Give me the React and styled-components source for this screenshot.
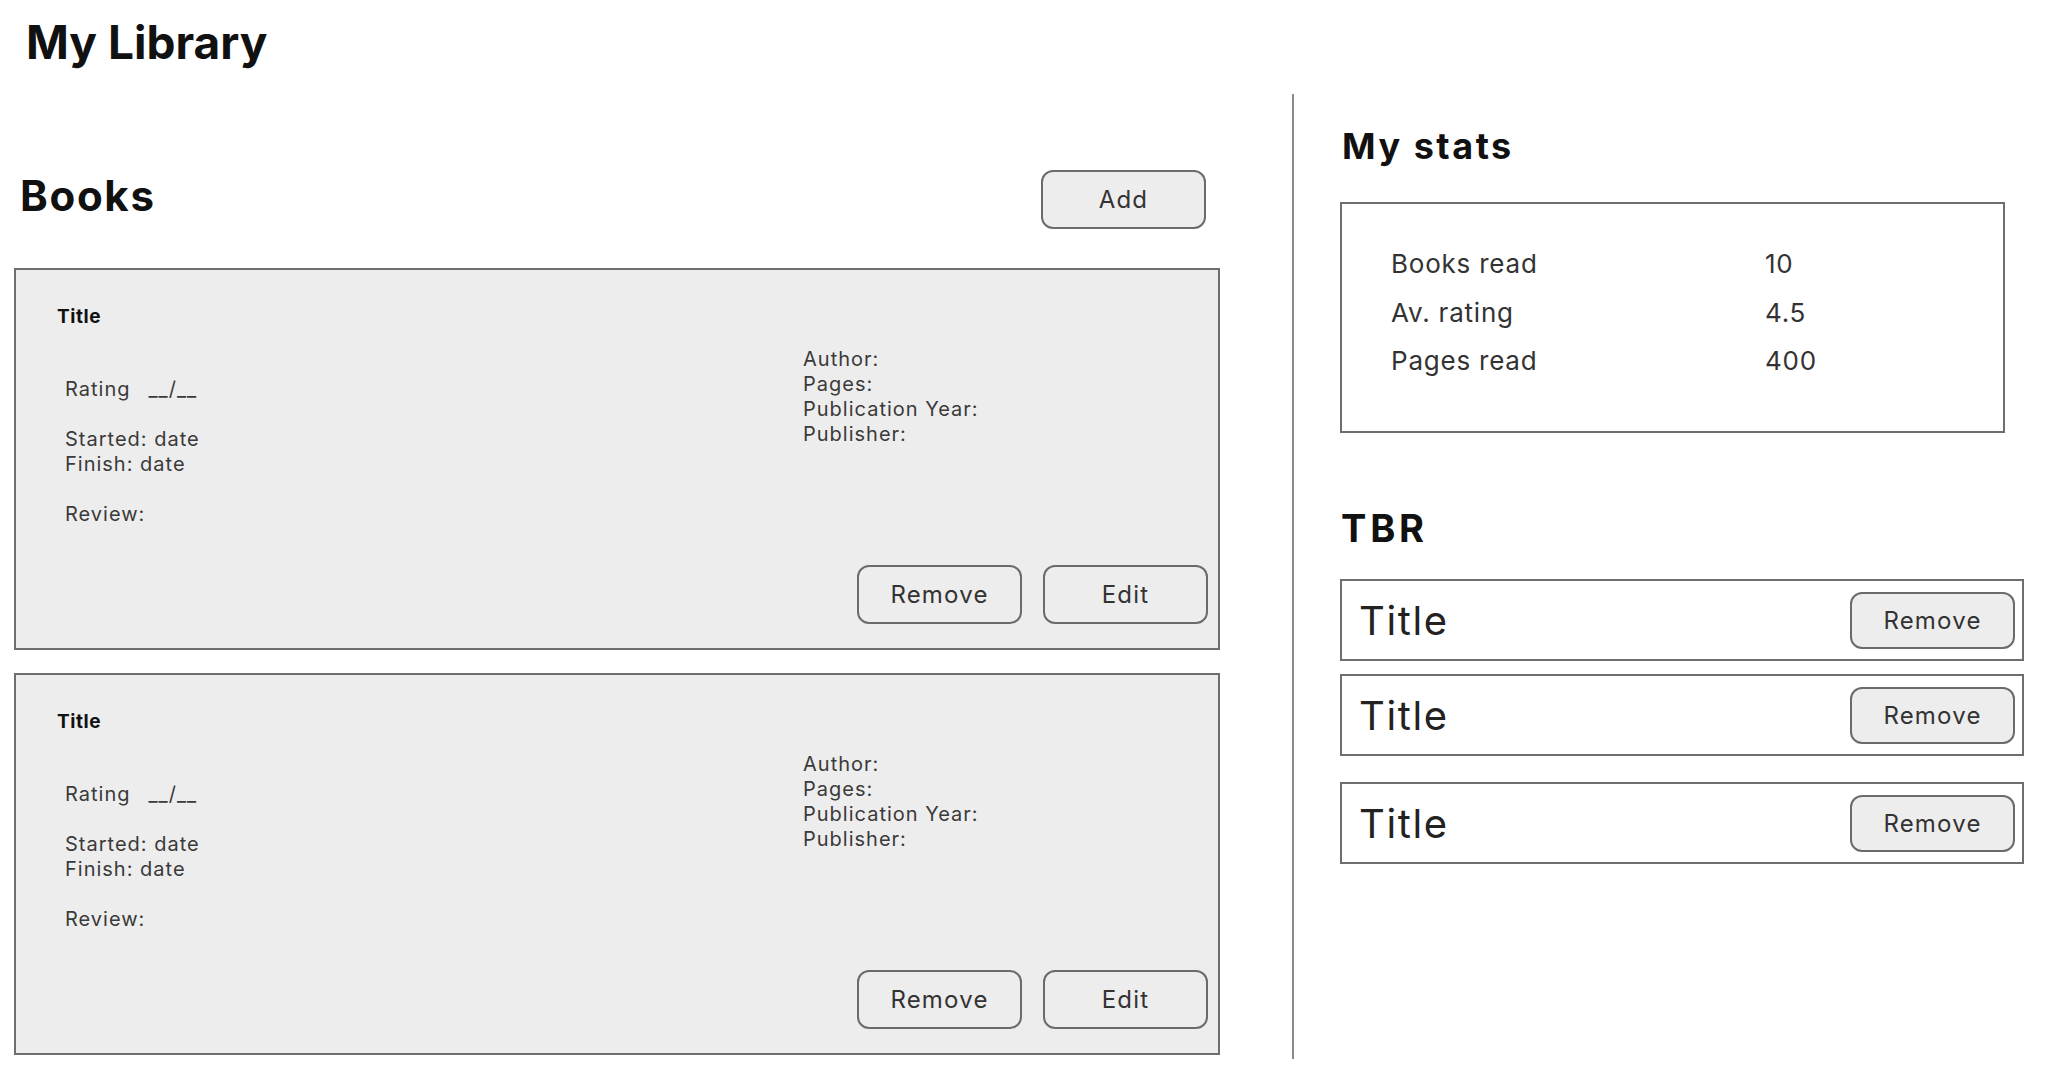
import styled, { createGlobalStyle } from 'styled-components';

const GlobalStyle = createGlobalStyle`
  body {
    margin: 0;
    background: #ffffff;
    font-family: Inter, "Noto Sans", "DejaVu Sans", sans-serif;
    color: #222;
  }
  * {
    box-sizing: border-box;
  }
`;

const books = [{ id: 1 }, { id: 2 }];

const stats = [
  { label: 'Books read', value: '10' },
  { label: 'Av. rating', value: '4.5' },
  { label: 'Pages read', value: '400' },
];

const tbr = [
  { id: 1, title: 'Title' },
  { id: 2, title: 'Title' },
  { id: 3, title: 'Title', spaced: true },
];

export default function App() {
  return (
    <>
      <GlobalStyle />
      <Page>
        <PageTitle>My Library</PageTitle>
        <Main>
          <BooksColumn>
            <SectionHeader>
              <BooksTitle>Books</BooksTitle>
              <Button>Add</Button>
            </SectionHeader>
            <BookList>
              {books.map(b => (
                <BookCard key={b.id}>
                  <CardBody>
                    <LeftInfo>
                      <BookTitle>Title</BookTitle>
                      <Field $gap={48}>
                        Rating<Blank>__/__</Blank>
                      </Field>
                      <Field $gap={25}>Started: date</Field>
                      <Field>Finish: date</Field>
                      <Field $gap={25}>Review:</Field>
                    </LeftInfo>
                    <RightInfo>
                      <Field>Author:</Field>
                      <Field>Pages:</Field>
                      <Field>Publication Year:</Field>
                      <Field>Publisher:</Field>
                    </RightInfo>
                  </CardBody>
                  <CardActions>
                    <Button>Remove</Button>
                    <Button>Edit</Button>
                  </CardActions>
                </BookCard>
              ))}
            </BookList>
          </BooksColumn>

          <Divider />

          <SideColumn>
            <StatsTitle>My stats</StatsTitle>
            <StatsBox>
              {stats.map(s => (
                <StatRow key={s.label}>
                  <span>{s.label}</span>
                  <span>{s.value}</span>
                </StatRow>
              ))}
            </StatsBox>
            <TbrTitle>TBR</TbrTitle>
            <TbrList>
              {tbr.map(t => (
                <TbrRow key={t.id} $spaced={t.spaced}>
                  <TbrName>{t.title}</TbrName>
                  <Button $compact>Remove</Button>
                </TbrRow>
              ))}
            </TbrList>
          </SideColumn>
        </Main>
      </Page>
    </>
  );
}

const Page = styled.div`
  width: 2046px;
  padding-top: 18px;
`;

const PageTitle = styled.h1`
  margin: 0 0 0 26px;
  font-size: 46px;
  line-height: 48px;
  font-weight: 700;
  color: #111;
`;

const Main = styled.div`
  display: flex;
  margin-top: 28px;
  min-height: 965px;
`;

const BooksColumn = styled.section`
  width: 1206px;
  margin-left: 14px;
  display: flex;
  flex-direction: column;
`;

const SectionHeader = styled.div`
  display: flex;
  justify-content: space-between;
  align-items: flex-start;
  margin-top: 76px;
  padding-right: 14px;
`;

const BooksTitle = styled.h2`
  margin: 0 0 0 6px;
  font-size: 42px;
  line-height: 51px;
  font-weight: 700;
  letter-spacing: 0.04em;
  color: #111;
`;

const Button = styled.button`
  width: 165px;
  height: ${p => (p.$compact ? '57px' : '59px')};
  background: #ededed;
  border: 2px solid #6b6b6b;
  border-radius: 12px;
  font-family: inherit;
  font-size: 24px;
  letter-spacing: 0.05em;
  color: #333;
  cursor: pointer;
`;

const BookList = styled.div`
  display: flex;
  flex-direction: column;
  gap: 23px;
  margin-top: 39px;
`;

const BookCard = styled.article`
  height: 382px;
  display: flex;
  flex-direction: column;
  background: #ededed;
  border: 2px solid #6e6e6e;
  padding: 35px 10px 24px 41px;
`;

const CardBody = styled.div`
  display: grid;
  grid-template-columns: 746px 1fr;
`;

const LeftInfo = styled.div`
  display: flex;
  flex-direction: column;
  padding-left: 8px;
`;

const RightInfo = styled.div`
  display: flex;
  flex-direction: column;
  padding-top: 42px;
`;

const BookTitle = styled.h3`
  margin: 0 0 0 -8px;
  font-size: 19px;
  line-height: 24px;
  font-weight: 700;
  letter-spacing: 0.03em;
  color: #111;
`;

const Field = styled.div`
  margin-top: ${p => p.$gap || 0}px;
  font-size: 20px;
  line-height: 25px;
  letter-spacing: 0.05em;
  color: #3a3a3a;
`;

const Blank = styled.span`
  margin-left: 18px;
`;

const CardActions = styled.div`
  margin-top: auto;
  display: flex;
  justify-content: flex-end;
  gap: 21px;
`;

const Divider = styled.div`
  width: 2px;
  margin-left: 72px;
  background: #8a8a8a;
  align-self: stretch;
`;

const SideColumn = styled.aside`
  width: 684px;
  margin-left: 46px;
  display: flex;
  flex-direction: column;
`;

const StatsTitle = styled.h2`
  margin: 30px 0 0 2px;
  font-size: 36px;
  line-height: 44px;
  font-weight: 700;
  letter-spacing: 0.07em;
  color: #111;
`;

const StatsBox = styled.div`
  width: 665px;
  height: 231px;
  margin-top: 34px;
  border: 2px solid #6e6e6e;
  padding: 36px 0 0 49px;
`;

const StatRow = styled.div`
  display: grid;
  grid-template-columns: 374px 1fr;
  font-size: 26px;
  line-height: 48.5px;
  letter-spacing: 0.03em;
  color: #333;
`;

const TbrTitle = styled.h2`
  margin: 73px 0 0 1px;
  font-size: 38px;
  line-height: 44px;
  font-weight: 700;
  letter-spacing: 0.1em;
  color: #111;
`;

const TbrList = styled.div`
  display: flex;
  flex-direction: column;
  margin-top: 29px;
`;

const TbrRow = styled.div`
  height: 82px;
  margin-top: ${p => (p.$spaced ? '26px' : '13px')};
  display: flex;
  align-items: center;
  justify-content: space-between;
  border: 2px solid #6e6e6e;
  padding: 0 7px 0 17px;

  &:first-child {
    margin-top: 0;
  }
`;

const TbrName = styled.span`
  font-size: 40px;
  letter-spacing: 0.04em;
  color: #222;
`;
